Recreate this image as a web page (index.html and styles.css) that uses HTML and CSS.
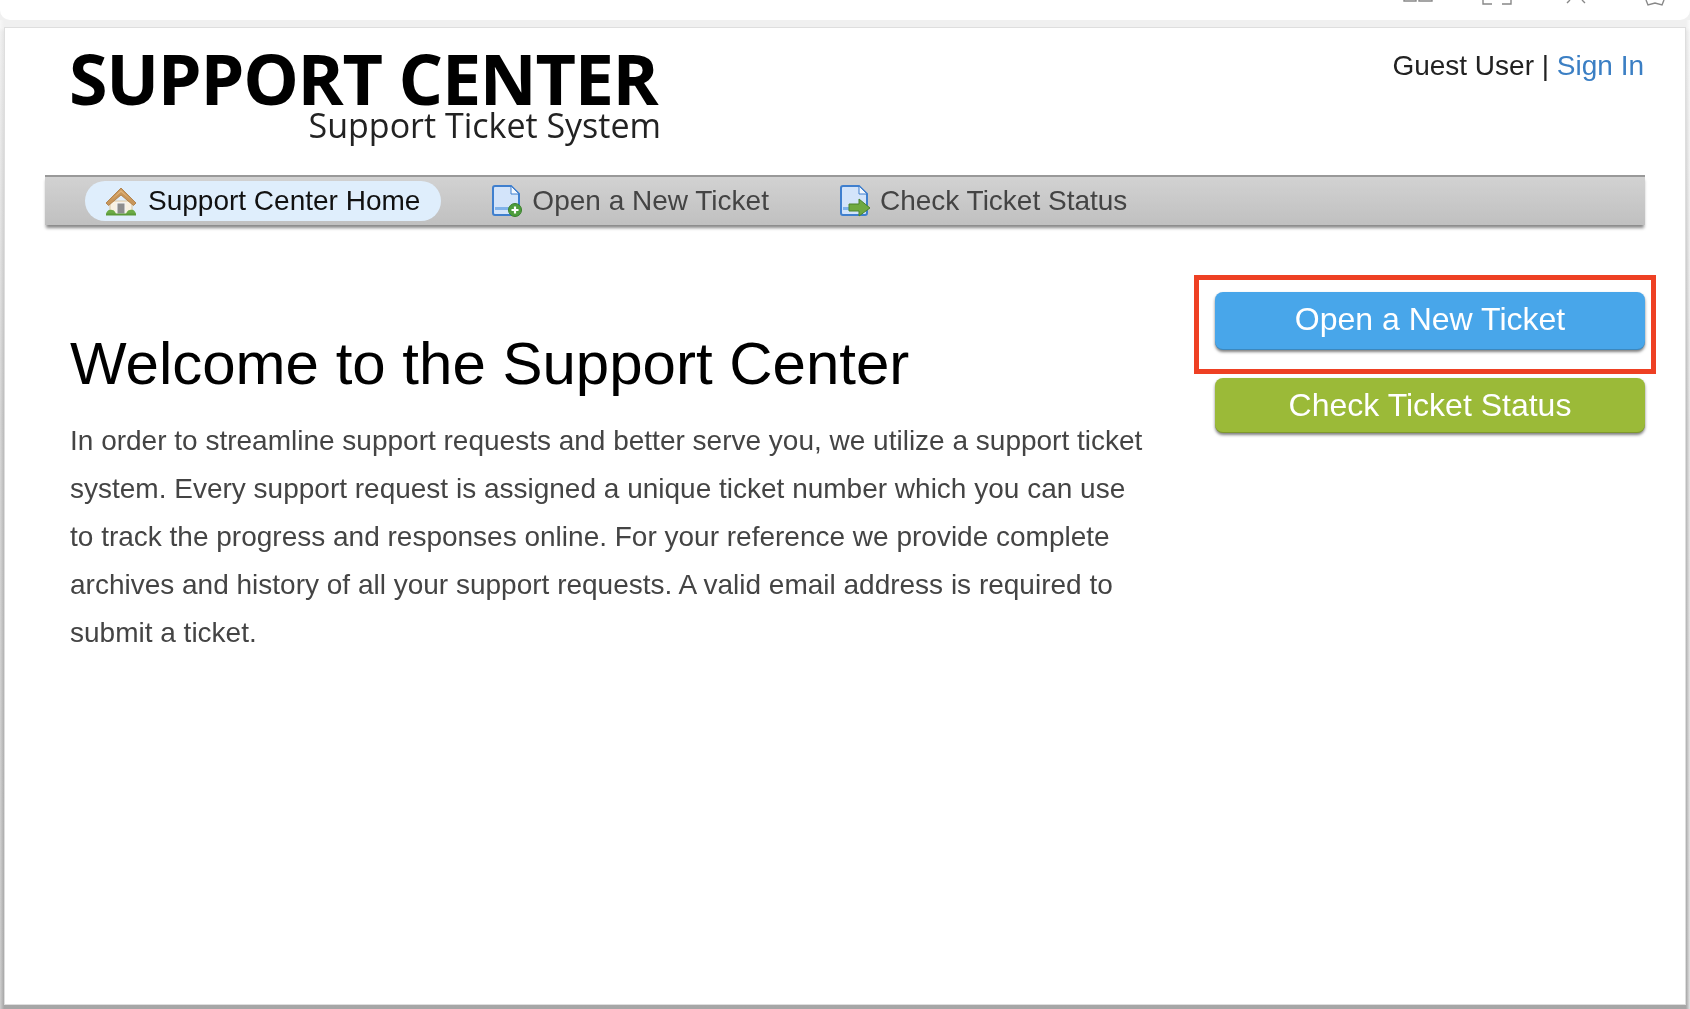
FILE: index.html
```html
<!DOCTYPE html>
<html lang="en">
<head>
<meta charset="utf-8">
<title>Support Center</title>
<link rel="stylesheet" href="styles.css">
</head>
<body>
<div class="toolbar">
  <svg class="tool-icon" viewBox="0 0 30 6"><path d="M1 0v1h12V0M16 0v1h13V0" fill="none" stroke="#888" stroke-width="1.4"/></svg>
  <svg class="tool-icon" viewBox="0 0 30 6"><path d="M1 0v4h9M20 4h9V0" fill="none" stroke="#888" stroke-width="1.4"/></svg>
  <svg class="tool-icon" viewBox="0 0 30 6"><path d="M6 3l3-3M24 3l-3-3" fill="none" stroke="#888" stroke-width="1.4"/></svg>
  <svg class="tool-icon tool-last" viewBox="0 0 30 6"><path d="M6 0l2 5 7-2 7 2 2-5" fill="none" stroke="#888" stroke-width="1.4"/></svg>
</div>
<div class="frame">
  <main class="card">
    <header class="head">
      <div class="logo">
        <div class="logo-title">SUPPORT CENTER</div>
        <div class="logo-sub">Support Ticket System</div>
      </div>
      <p class="user">Guest User | <a href="#">Sign In</a></p>
    </header>
    <nav class="nav">
      <a class="nav-item active" href="#">
        <svg class="nav-icon" viewBox="0 0 32 32">
          <path d="M5 16h22v13H5z" fill="#f8f1e2" stroke="#d9c6a3"/>
          <path d="M16 3 1 18l2.500 2.500L16 10l12.500 10.500L31 18z" fill="#c8965a" stroke="#a9763c" stroke-width=".8"/>
          <path d="M16 5 6 15l10-8 10 8z" fill="#e2b57c"/>
          <rect x="12" y="18" width="8" height="11" fill="#8d8d8d" stroke="#f4f4f4"/>
          <path d="M1 30c0-4 3-6 6-5 2 0 4 2 4 5zM31 30c0-4-3-6-6-5-2 0-4 2-4 5z" fill="#6cab46"/>
          <rect x="1" y="28.500" width="30" height="2" fill="#5b9a38"/>
        </svg>
        Support Center Home
      </a>
      <a class="nav-item" href="#">
        <svg class="nav-icon" viewBox="0 0 32 32">
          <path d="M2 3a2 2 0 0 1 2-2h16l8 8v19a2 2 0 0 1-2 2H4a2 2 0 0 1-2-2z" fill="#d3e4fa" stroke="#3f7fce" stroke-width="2"/>
          <path d="M20 1v8h8z" fill="#f4f8fe" stroke="#3f7fce"/>
          <rect x="4" y="22" width="16" height="3" fill="#7fb2ea"/>
          <circle cx="24" cy="25" r="6.500" fill="#4d9d3c" stroke="#3a7f2c"/>
          <path d="M24 21.500v7M20.500 25h7" stroke="#fff" stroke-width="2.200"/>
        </svg>
        Open a New Ticket
      </a>
      <a class="nav-item" href="#">
        <svg class="nav-icon" viewBox="0 0 32 32">
          <path d="M2 3a2 2 0 0 1 2-2h16l8 8v19a2 2 0 0 1-2 2H4a2 2 0 0 1-2-2z" fill="#d3e4fa" stroke="#3f7fce" stroke-width="2"/>
          <path d="M20 1v8h8z" fill="#f4f8fe" stroke="#3f7fce"/>
          <rect x="4" y="22" width="8" height="3" fill="#7fb2ea"/>
          <path d="M10 19h10v-5l11 9-11 8v-5H10z" fill="#6fa941" stroke="#4a842d"/>
        </svg>
        Check Ticket Status
      </a>
    </nav>
    <div class="content">
      <section class="welcome">
        <h1>Welcome to the Support Center</h1>
        <p>In order to streamline support requests and better serve you, we utilize a support ticket system. Every support request is assigned a unique ticket number which you can use to track the progress and responses online. For your reference we provide complete archives and history of all your support requests. A valid email address is required to submit a ticket.</p>
      </section>
      <aside class="actions">
        <a class="btn btn-blue" href="#">Open a New Ticket</a>
        <a class="btn btn-green" href="#">Check Ticket Status</a>
      </aside>
    </div>
  </main>
</div>
</body>
</html>
```
FILE: styles.css
```css
* { box-sizing: border-box; }
html, body { margin: 0; height: 100%; }
body {
  display: flex;
  flex-direction: column;
  overflow: hidden;
  background: #f0f0f0;
  font-family: "Liberation Sans", Arial, sans-serif;
  color: #000;
}
a { text-decoration: none; }
.toolbar {
  height: 20px;
  flex: none;
  background: #fff;
  border-radius: 0 0 10px 10px;
  display: flex;
  justify-content: flex-end;
  gap: 49px;
  padding-right: 20px;
}
.tool-icon { width: 30px; height: 6px; }
.frame {
  flex: 1;
  min-height: 0;
  padding: 8px 5px 5px;
  background:
    linear-gradient(to right, rgba(255,255,255,.45), transparent 4px, transparent calc(100% - 4px), rgba(255,255,255,.7)),
    linear-gradient(#f0f0f0 8px, #e6e6e6 12px, #bababa 400px, #a6a6a6 100%);
  display: flex;
}
.card {
  flex: 1;
  background: #fff;
  box-shadow: 0 0 0 1px #dedede;
  padding: 0 40px;
  filter: blur(0.4px);
}
.head {
  display: flex;
  justify-content: space-between;
  align-items: flex-start;
  height: 147px;
  padding: 20px 0 0 24px;
}
.logo { width: 592px; }
.logo-title {
  font: 700 70px/60px "Open Sans", sans-serif;
  letter-spacing: -1.3px;
  white-space: nowrap;
}
.logo-sub {
  font: 400 34px/34px "Open Sans", sans-serif;
  text-align: right;
  color: #222;
}
.user { margin: -2px 1px 0 0; font-size: 28px; line-height: 40px; color: #222; }
.user a { color: #3b7fc4; }
.nav {
  height: 50px;
  display: flex;
  align-items: center;
  gap: 30px;
  padding-left: 40px;
  border-top: 2px solid #999;
  background: linear-gradient(#d2d2d2, #c0c0c0);
  box-shadow: 0 4px 3px -1px #888;
}
.nav-item {
  display: flex;
  align-items: center;
  gap: 9px;
  height: 40px;
  padding: 0 20px;
  border-radius: 20px;
  font-size: 28px;
  color: #444;
}
.nav-item.active { gap: 11px; padding-right: 21px; background: #dfeefc; color: #111; }
.nav-icon { width: 32px; height: 32px; flex: none; }
.content {
  display: flex;
  justify-content: space-between;
  align-items: flex-start;
  padding: 0 0 0 25px;
}
.welcome { width: 1080px; padding-top: 103px; }
h1 {
  margin: 0;
  font-size: 60px;
  font-weight: 400;
  line-height: 72px;
  color: #000;
}
.welcome p {
  margin: 17px 0 0;
  font-size: 28px;
  line-height: 48px;
  color: #444;
}
.actions {
  width: 430px;
  padding-top: 67px;
  display: flex;
  flex-direction: column;
  gap: 28px;
}
.btn {
  display: flex;
  align-items: center;
  justify-content: center;
  border-radius: 8px;
  color: #fff;
  font-size: 32px;
  box-shadow: inset 0 -1px 0 rgba(0,0,0,.18), 0 2px 3px rgba(0,0,0,.5);
}
.btn-blue { height: 58px; padding-bottom: 4px; background: #48a6ea; position: relative; }
.btn-green { height: 55px; background: #9bba38; }
.btn-blue::after {
  content: "";
  position: absolute;
  left: -21px;
  right: -11px;
  top: -17px;
  bottom: -24px;
  border: 5px solid #ee4023;
}
```
